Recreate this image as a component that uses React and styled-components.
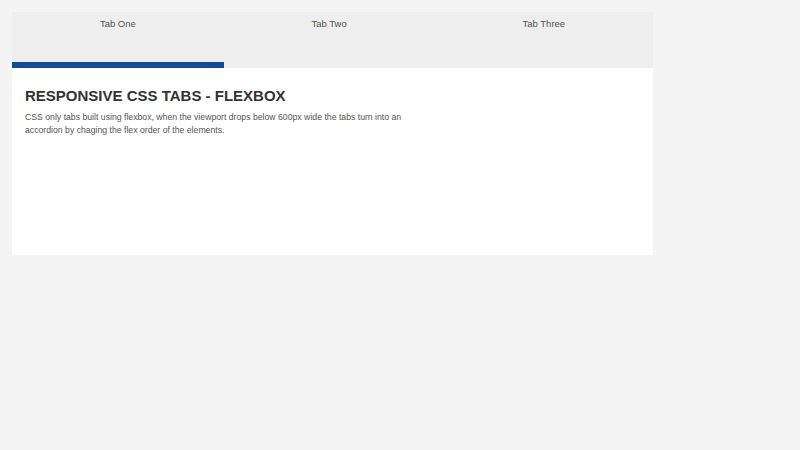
import styled, { createGlobalStyle } from "styled-components";
import { useState } from "react";

const GlobalStyle = createGlobalStyle`
  body {
    margin: 0;
    background: #f4f4f4;
    font-family: "Liberation Sans", Arial, sans-serif;
  }
`;

const tabs = [
  {
    label: "Tab One",
    title: "Responsive CSS Tabs - Flexbox",
    text: "CSS only tabs built using flexbox, when the viewport drops below 600px wide the tabs turn into an accordion by chaging the flex order of the elements.",
  },
  { label: "Tab Two", title: "Tab Two", text: "Content for the second tab." },
  { label: "Tab Three", title: "Tab Three", text: "Content for the third tab." },
];

export default function App() {
  const [active, setActive] = useState(0);
  const current = tabs[active];

  return (
    <>
      <GlobalStyle />
      <StyledPage>
        <StyledTabs>
          <StyledTabBar>
            {tabs.map((tab, index) => (
              <StyledTab
                key={tab.label}
                $active={index === active}
                onClick={() => setActive(index)}
              >
                {tab.label}
              </StyledTab>
            ))}
          </StyledTabBar>
          <StyledPanel>
            <StyledTitle>{current.title}</StyledTitle>
            <StyledText>{current.text}</StyledText>
          </StyledPanel>
        </StyledTabs>
      </StyledPage>
    </>
  );
}

const StyledPage = styled.main`
  padding: 12px 147px 0 12px;
`;

const StyledTabs = styled.section`
  width: 641px;
  display: flex;
  flex-direction: column;
`;

const StyledTabBar = styled.div`
  display: flex;
  background: #eeeeee;
`;

const StyledTab = styled.button`
  flex: 1 1 auto;
  height: 56px;
  padding: 6px 0 0 0;
  border: none;
  border-bottom: 6px solid ${(props) => (props.$active ? "#174a94" : "transparent")};
  background: transparent;
  color: #555;
  font-family: inherit;
  font-size: 9.5px;
  display: flex;
  justify-content: center;
  align-items: flex-start;
  cursor: pointer;
`;

const StyledPanel = styled.div`
  background: #fff;
  height: 187px;
  padding: 19px 12px 0 13px;
  box-sizing: border-box;
`;

const StyledTitle = styled.h1`
  margin: 0 0 6px 0;
  font-size: 15px;
  line-height: 18px;
  font-weight: bold;
  text-transform: uppercase;
  color: #333;
`;

const StyledText = styled.p`
  margin: 0;
  max-width: 392px;
  font-size: 8.7px;
  line-height: 13px;
  color: #555;
`;
